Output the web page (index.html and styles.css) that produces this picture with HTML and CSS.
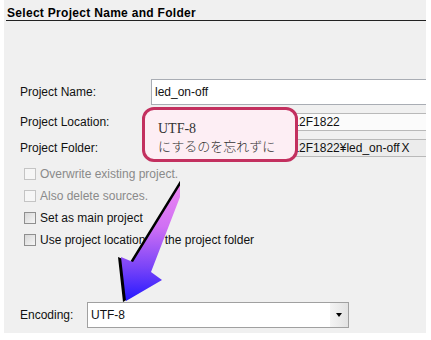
FILE: index.html
```html
<!DOCTYPE html>
<html lang="en">
<head>
    <meta charset="UTF-8">
    <meta name="viewport" content="width=device-width, initial-scale=1.0">
    <title>Select Project Name and Folder</title>
    <link rel="stylesheet" href="styles.css">
</head>
<body>

    <div class="panel">
        <h2 class="title">Select Project Name and Folder</h2>

        <div class="fields">
            <label for="projectName">Project Name:</label>
            <div class="input input-name" id="projectName">led_on-off</div>

            <label for="projectLocation">Project Location:</label>
            <div class="input input-location" id="projectLocation">C:¥MPLABXProjects¥PIC12F1822</div>

            <label for="projectFolder">Project Folder:</label>
            <div class="input input-folder" id="projectFolder">C:¥MPLABXProjects¥PIC12F1822¥led_on-off<span class="caret">X</span></div>
        </div>

        <div class="checks">
            <div class="check disabled"><span class="box"></span>Overwrite existing project.</div>
            <div class="check disabled"><span class="box"></span>Also delete sources.</div>
            <div class="check"><span class="box"></span>Set as main project</div>
            <div class="check"><span class="box"></span>Use project location as the project folder</div>
        </div>

        <div class="encoding">
            <label for="encoding">Encoding:</label>
            <div class="select" id="encoding">
                <span class="select-value">UTF-8</span>
                <span class="select-button"><span class="triangle"></span></span>
            </div>
        </div>

        <!-- note balloon and arrow drawn over the form -->
        <div class="callout">
            <div class="callout-en">UTF-8</div>
            <div class="callout-ja">にするのを忘れずに</div>
        </div>

        <svg class="arrow" width="80" height="160" viewBox="100 150 80 160">
            <defs>
                <linearGradient id="arrowFill" x1="0" y1="0" x2="0" y2="1">
                    <stop offset="0" stop-color="#f890f0"/>
                    <stop offset="0.45" stop-color="#d070f4"/>
                    <stop offset="0.75" stop-color="#7a44f8"/>
                    <stop offset="1" stop-color="#2418ff"/>
                </linearGradient>
            </defs>
            <polygon points="189,166 148,273 158,281 123,302 118,257 130,262" fill="#000"/>
            <polygon points="192,166 151,272 162,280 126,301 121,257 133,262" fill="url(#arrowFill)"/>
        </svg>
    </div>

</body>
</html>
```

FILE: styles.css
```css
body {
    margin: 0;
    background-color: #fff;
    font-family: "Liberation Sans", Arial, "Noto Sans CJK JP", sans-serif;
    font-size: 12px;
    color: #111;
}
.panel {
    position: relative;
    width: 422px;
    height: 333px;
    margin-left: 4px;
    background-color: #f0f0f0;
    overflow: hidden;
}
.title {
    margin: 0 0 0 2px;
    padding: 6px 0 0 1px;
    font-size: 12px;
    line-height: 14px;
    font-weight: bold;
    letter-spacing: 0.3px;
    color: #000;
    border-bottom: 1px solid #222;
}
.fields {
    display: grid;
    grid-template-columns: 131px 1fr;
    row-gap: 8px;
    align-items: center;
    margin: 58px -3px 0 16px;
}
.input {
    box-sizing: border-box;
    height: 18px;
    padding-left: 3px;
    line-height: 16px;
    border: 1px solid #b9b9b9;
    background-color: #fbfbfb;
    white-space: nowrap;
    overflow: hidden;
}
.input-name {
    height: 26px;
    line-height: 24px;
    border-color: #a9adb4;
    background-color: #fff;
}
.input-folder {
    background-color: #ececec;
}
.caret {
    margin-left: 2px;
    font-weight: 300;
}
.checks {
    margin: 6px 0 0 20px;
}
.check {
    display: flex;
    align-items: center;
    height: 22px;
}
.check .box {
    box-sizing: border-box;
    width: 12px;
    height: 12px;
    margin-right: 4px;
    border: 1px solid #8f8f8f;
    background: linear-gradient(135deg, #d8d8d8, #f6f6f6);
}
.check.disabled {
    color: #8a8a8a;
}
.check.disabled .box {
    border-color: #c4c4c4;
    background: #f6f6f6;
}
.encoding {
    display: flex;
    align-items: center;
    margin: 51px 0 0 16px;
}
.encoding label {
    width: 67px;
}
.select {
    box-sizing: border-box;
    display: flex;
    width: 262px;
    height: 26px;
    border: 1px solid #a0a0a0;
    background-color: #fff;
}
.select-value {
    flex: 1;
    padding-left: 3px;
    line-height: 24px;
}
.select-button {
    display: flex;
    align-items: center;
    justify-content: center;
    width: 18px;
    background: linear-gradient(to right, #f4f4f4, #e2e2e2);
}
.triangle {
    width: 0;
    height: 0;
    border-left: 3px solid transparent;
    border-right: 3px solid transparent;
    border-top: 4px solid #000;
}
.callout {
    position: absolute;
    left: 138px;
    top: 107px;
    box-sizing: border-box;
    width: 156px;
    height: 55px;
    padding: 10px 0 0 13px;
    border: 3px solid #c3305f;
    border-radius: 12px;
    background-color: #fdeef4;
    color: #333;
}
.callout-en {
    font-family: "Liberation Serif", "Times New Roman", serif;
    font-size: 14px;
    line-height: 17px;
}
.callout-ja {
    font-family: "Noto Sans CJK JP", sans-serif;
    font-size: 13px;
    line-height: 17px;
    font-weight: 300;
}
.arrow {
    position: absolute;
    left: 96px;
    top: 150px;
}
```
